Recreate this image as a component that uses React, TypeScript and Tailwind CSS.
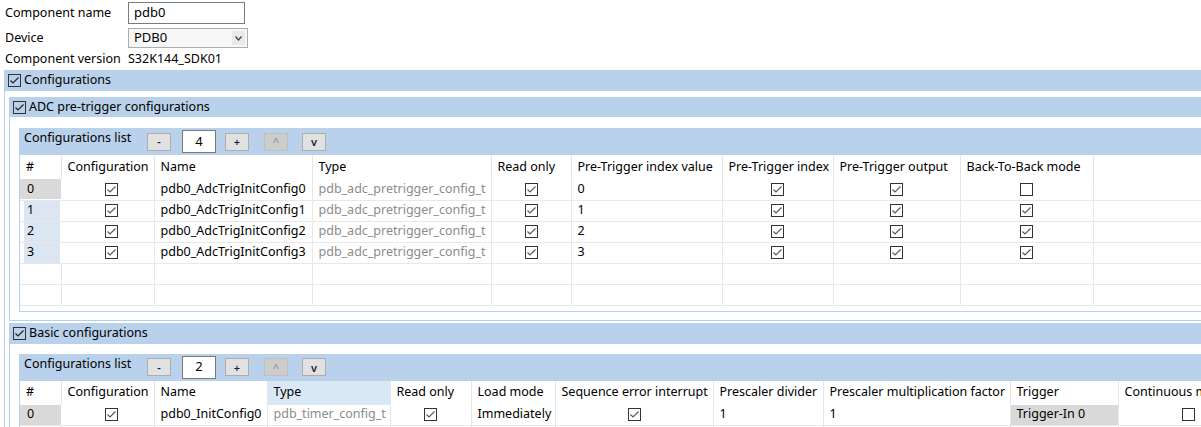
import React from 'react';

const ADC_COLS = [
  { label: '#', w: 41 },
  { label: 'Configuration', w: 93 },
  { label: 'Name', w: 158 },
  { label: 'Type', w: 179 },
  { label: 'Read only', w: 80 },
  { label: 'Pre-Trigger index value', w: 151 },
  { label: 'Pre-Trigger index', w: 111 },
  { label: 'Pre-Trigger output', w: 127 },
  { label: 'Back-To-Back mode', w: 133 },
  { label: '', w: 108 },
];

const ADC_ROWS = [0, 1, 2, 3].map((i) => ({
  idx: i,
  name: `pdb0_AdcTrigInitConfig${i}`,
  type: 'pdb_adc_pretrigger_config_t',
  value: String(i),
  backToBack: i !== 0,
}));

const BASIC_COLS = [
  { label: '#', w: 41 },
  { label: 'Configuration', w: 93 },
  { label: 'Name', w: 113 },
  { label: 'Type', w: 123, hl: true },
  { label: 'Read only', w: 81 },
  { label: 'Load mode', w: 84 },
  { label: 'Sequence error interrupt', w: 158 },
  { label: 'Prescaler divider', w: 110 },
  { label: 'Prescaler multiplication factor', w: 187 },
  { label: 'Trigger', w: 108 },
  { label: 'Continuous mode', w: 140 },
];

function Check({ on = true, bar = false }: { on?: boolean; bar?: boolean }) {
  return (
    <svg width="13" height="13" viewBox="0 0 13 13" className="block shrink-0">
      <rect x="0.5" y="0.5" width="12" height="12" fill={bar ? 'none' : '#fff'} stroke="#333" />
      {on && (
        <polyline
          points="2.5,6.5 5,9 10.5,3.5"
          fill="none"
          stroke={bar ? '#222' : '#5a5a5a'}
          strokeWidth="1.2"
        />
      )}
    </svg>
  );
}

function Btn({ children, disabled }: { children: React.ReactNode; disabled?: boolean }) {
  return (
    <div
      className={`w-[24px] h-[18px] flex items-center justify-center border text-[11px] leading-none ${
        disabled
          ? 'bg-[#cccccc] border-[#bfbfbf] text-[#8a8a8a]'
          : 'bg-[#e1e1e1] border-[#adadad] text-[#1a1a40] font-semibold'
      }`}
    >
      {children}
    </div>
  );
}

function ListBar({ count }: { count: number }) {
  return (
    <div className="h-[27px] bg-[#b9d1ea] flex items-center pl-[5px]">
      <span className="w-[123px] self-start pt-[2px] leading-[16px]">Configurations list</span>
      <Btn>-</Btn>
      <div className="ml-[11px] w-[34px] h-[23px] bg-white border border-[#7a7a7a] flex items-center justify-center text-[13px]">
        {count}
      </div>
      <div className="ml-[9px]"><Btn>+</Btn></div>
      <div className="ml-[15px]"><Btn disabled>^</Btn></div>
      <div className="ml-[14px]"><Btn>v</Btn></div>
    </div>
  );
}

function SectionBar({ label, h }: { label: string; h: string }) {
  return (
    <div className={`${h} bg-[#b9d1ea] flex items-center gap-[3px] pl-[4px]`}>
      <Check bar />
      <span className="leading-none">{label}</span>
    </div>
  );
}

const cell = 'border-r border-b border-[#e8e8e8] px-[6px] h-[21px] whitespace-nowrap overflow-hidden';
const head = 'border-r border-[#e6e6e6] px-[6px] h-[24px] text-left font-normal whitespace-nowrap overflow-hidden';

function Centered({ children }: { children: React.ReactNode }) {
  return <div className="flex justify-center">{children}</div>;
}

// the "Configuration" column draws its box a little right of centre
function ConfigCheck() {
  return <div className="flex justify-center pl-[8px]"><Check /></div>;
}

function AdcTable() {
  return (
    <table className="table-fixed border-collapse" style={{ width: 1181 }}>
      <colgroup>
        {ADC_COLS.map((c, i) => <col key={i} style={{ width: c.w }} />)}
      </colgroup>
      <thead>
        <tr>
          {ADC_COLS.map((c, i) => (
            <th key={i} className={`${head} ${i === ADC_COLS.length - 1 ? 'border-r-0' : ''}`}>{c.label}</th>
          ))}
        </tr>
      </thead>
      <tbody>
        {ADC_ROWS.map((r) => (
          <tr key={r.idx}>
            <td className="border-b border-[#e8e8e8] h-[21px] p-0">
              {r.idx === 0 ? (
                <div className="h-[20px] bg-[#d9d9d9] pl-[7px] flex items-center">{r.idx}</div>
              ) : (
                <div className="h-[20px] ml-[4px] mr-[1px] bg-[#dce6f2] pl-[3px] flex items-center">{r.idx}</div>
              )}
            </td>
            <td className={cell}><ConfigCheck /></td>
            <td className={cell}>{r.name}</td>
            <td className={`${cell} text-[#8c8c8c]`}>{r.type}</td>
            <td className={cell}><Centered><Check /></Centered></td>
            <td className={cell}>{r.value}</td>
            <td className={cell}><Centered><Check /></Centered></td>
            <td className={cell}><Centered><Check /></Centered></td>
            <td className={cell}><Centered><Check on={r.backToBack} /></Centered></td>
            <td className={`${cell} border-r-0`}></td>
          </tr>
        ))}
        {[0, 1].map((k) => (
          <tr key={`e${k}`}>
            {ADC_COLS.map((_, i) => (
              <td key={i} className={`${cell} ${i === 0 ? 'border-r-[#dfe8f3]' : ''} ${i === ADC_COLS.length - 1 ? 'border-r-0' : ''}`}></td>
            ))}
          </tr>
        ))}
      </tbody>
    </table>
  );
}

function BasicTable() {
  return (
    <table className="table-fixed border-collapse" style={{ width: 1238 }}>
      <colgroup>
        {BASIC_COLS.map((c, i) => <col key={i} style={{ width: c.w }} />)}
      </colgroup>
      <thead>
        <tr>
          {BASIC_COLS.map((c, i) => (
            <th key={i} className={`${head} ${c.hl ? 'bg-[#dae8f6]' : ''}`}>{c.label}</th>
          ))}
        </tr>
      </thead>
      <tbody>
        <tr>
          <td className="border-b border-[#e8e8e8] h-[21px] p-0">
            <div className="h-[20px] bg-[#d9d9d9] pl-[7px] flex items-center">0</div>
          </td>
          <td className={cell}><ConfigCheck /></td>
          <td className={cell}>pdb0_InitConfig0</td>
          <td className={`${cell} text-[#8c8c8c]`}>pdb_timer_config_t</td>
          <td className={cell}><Centered><Check /></Centered></td>
          <td className={cell}>Immediately</td>
          <td className={cell}><Centered><Check /></Centered></td>
          <td className={cell}>1</td>
          <td className={cell}>1</td>
          <td className={`${cell} bg-[#d9d9d9]`}>Trigger-In 0</td>
          <td className={cell}><Centered><Check on={false} /></Centered></td>
        </tr>
        <tr>
          {BASIC_COLS.map((_, i) => <td key={i} className={cell}></td>)}
        </tr>
      </tbody>
    </table>
  );
}

export default function App() {
  return (
    <div className="w-[1201px] h-[427px] overflow-hidden bg-white text-black text-[12.5px] font-['Noto_Sans',sans-serif]">
      {/* Component header */}
      <div className="pl-[5px] pt-[2px]">
        <div className="flex items-center h-[22px]">
          <span className="w-[123px]">Component name</span>
          <div className="w-[117px] h-[22px] border border-[#7a7a7a] flex items-center pl-[5px] text-[13px]">pdb0</div>
        </div>
        <div className="flex items-center h-[20px] mt-[4px]">
          <span className="w-[123px]">Device</span>
          <div className="w-[120px] h-[20px] border border-[#adadad] bg-[#f7f7f7] flex items-center pl-[5px] pr-[2px] text-[13px]">
            <span className="flex-1">PDB0</span>
            <div className="w-[13px] h-[14px] bg-[#e9e9e9] flex items-center justify-center">
              <svg width="7" height="5" viewBox="0 0 7 5"><polyline points="0.5,0.5 3.5,4 6.5,0.5" fill="none" stroke="#444" strokeWidth="1.3" /></svg>
            </div>
          </div>
        </div>
        <div className="flex items-center h-[22px]">
          <span className="w-[123px]">Component version</span>
          <span>S32K144_SDK01</span>
        </div>
      </div>

      {/* Configurations */}
      <div className="ml-[4px]">
        <SectionBar label="Configurations" h="h-[21px]" />
        <div className="border-l border-[#b9d1ea] pl-[4px] pt-[6px]">
          <SectionBar label="ADC pre-trigger configurations" h="h-[20px]" />
          <div className="border-l border-b border-[#b9d1ea] pl-[9px] pt-[11px] pb-[8px]">
            <div className="border-l border-b border-[#b9d1ea] pb-[5px]">
              <div className="-ml-[1px]"><ListBar count={4} /></div>
              <AdcTable />
            </div>
          </div>
          <div className="mt-[2px]">
            <SectionBar label="Basic configurations" h="h-[21px]" />
          </div>
          <div className="border-l border-[#b9d1ea] pl-[9px] pt-[10px]">
            <div className="border-l border-[#b9d1ea]">
              <div className="-ml-[1px]"><ListBar count={2} /></div>
              <BasicTable />
            </div>
          </div>
        </div>
      </div>
    </div>
  );
}
